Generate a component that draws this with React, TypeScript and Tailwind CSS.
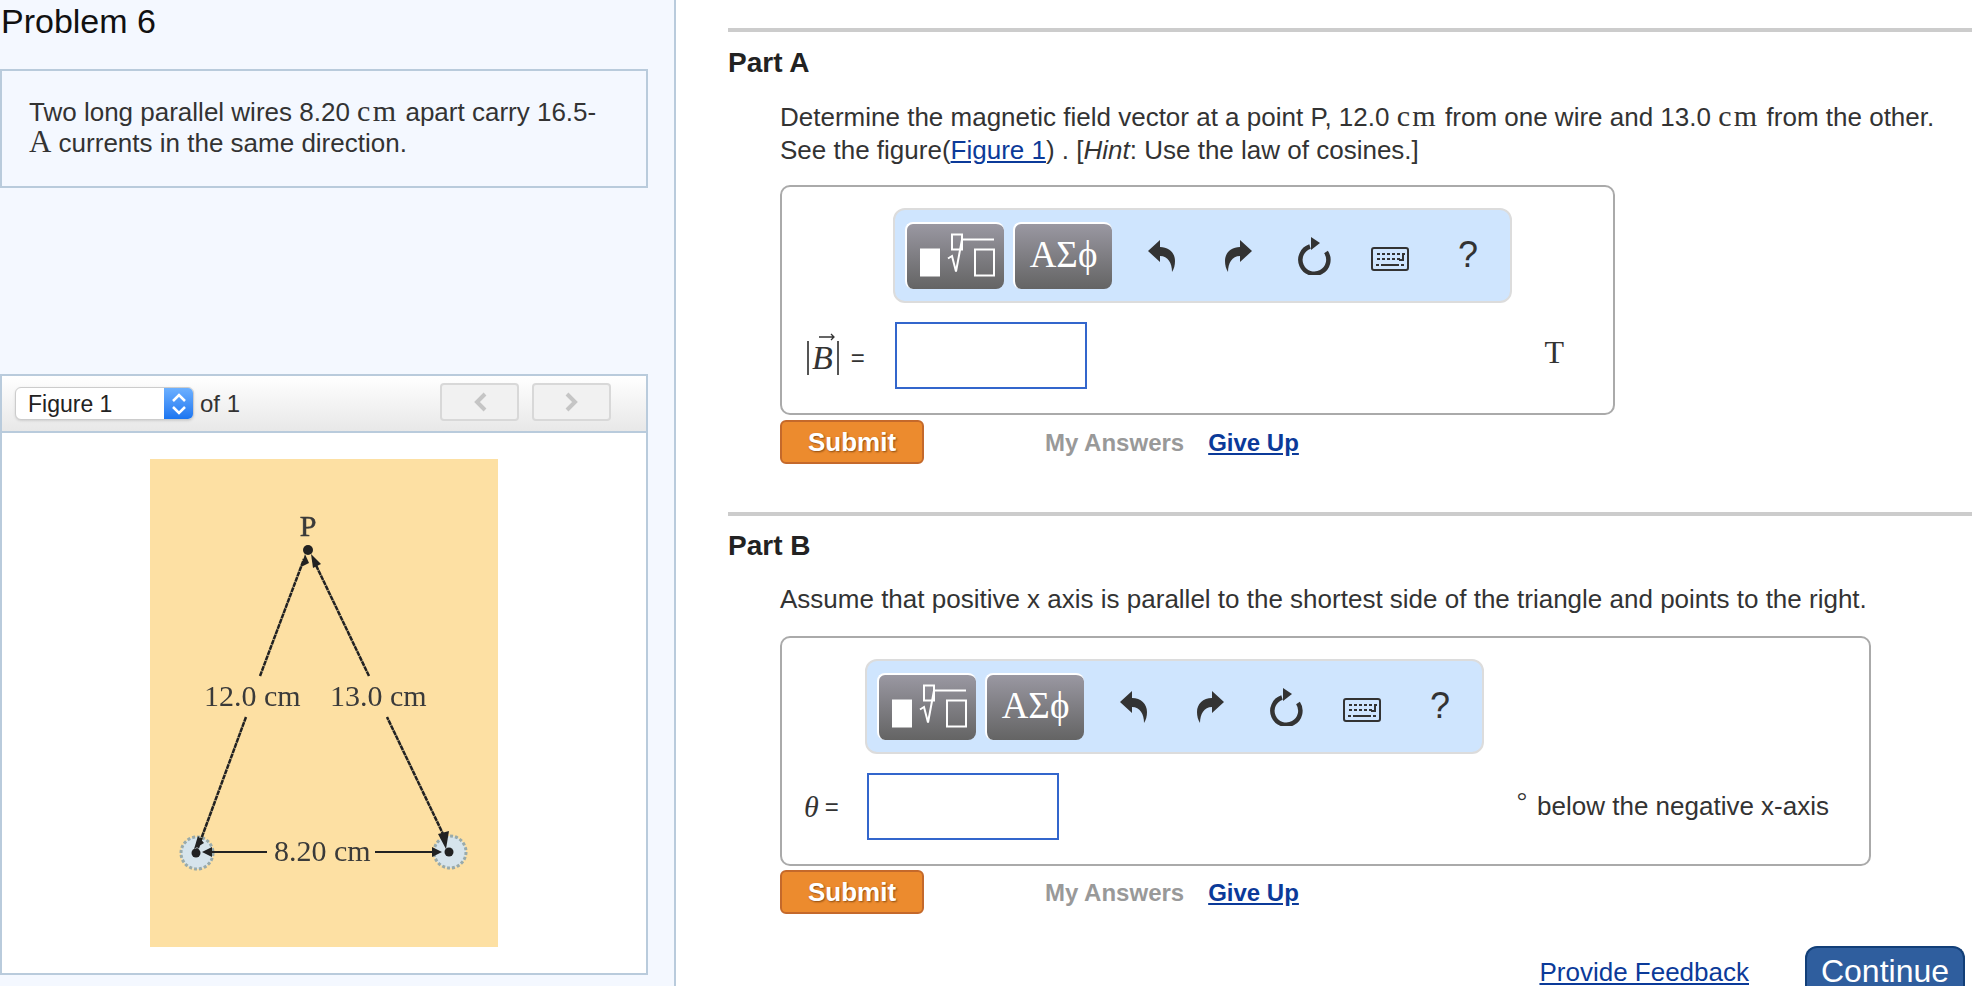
import React from 'react';

const sans = "font-['Liberation_Sans',Arial,sans-serif]";
const serif = "font-['Liberation_Serif',serif]";
const cm = `${serif} text-[30px] leading-[20px] tracking-[2.25px]`;

function UndoIcon({ flip }: { flip?: boolean }) {
  return (
    <svg width="30" height="34" viewBox="0 0 30 34" className={flip ? '-scale-x-100' : ''}>
      <path d="M1 12 L13 1 L13 8 C22 8 28 14 28 22 C28 26 27 30 25 33 C25 24 21 17 13 17 L13 23 Z" fill="#333" />
    </svg>
  );
}

function ResetIcon() {
  return (
    <svg width="36" height="38" viewBox="0 0 36 38" fill="none">
      <path d="M14 9.5 A14 14 0 1 0 30 15" stroke="#333" strokeWidth="4.5" />
      <path d="M15 0 L24 6 L15 13 Z" fill="#333" />
    </svg>
  );
}

function KeyboardIcon() {
  const top = [6, 11, 16, 21, 26, 31];
  const mid = [6, 11, 16, 21, 26];
  return (
    <svg width="38" height="24" viewBox="0 0 38 24">
      <rect x="1" y="1" width="36" height="22" rx="2" fill="none" stroke="#333" strokeWidth="2" />
      {top.map((x) => <rect key={x} x={x} y="6" width="3" height="2" fill="#333" />)}
      {mid.map((x) => <rect key={x} x={x} y="11" width="3" height="2" fill="#333" />)}
      <path d="M33 6 V14 H28 V12 H31 V6 Z" fill="#333" />
      <rect x="5" y="17" width="3" height="2" fill="#333" />
      <rect x="10" y="17" width="18" height="2" fill="#333" />
      <rect x="30" y="17" width="3" height="2" fill="#333" />
    </svg>
  );
}

function MathToolbar() {
  return (
    <div className="flex h-[95px] w-[619px] items-center rounded-xl border-2 border-[#dcdcdc] bg-[#cfe5fe] pl-[10px]">
      <div className="flex h-[67px] w-[99px] items-center rounded-lg border-t-2 border-l-2 border-white bg-gradient-to-b from-[#9a98a2] to-[#646464] pl-[12px]">
        <svg width="80" height="48" viewBox="0 0 80 48" fill="none">
          <rect x="1" y="15.5" width="20" height="28" fill="#fff" />
          <rect x="33" y="1.5" width="10" height="15" stroke="#fff" strokeWidth="2" />
          <path d="M29 25.5 L33 23 L37 38.5 L43 6.5 H75" stroke="#fff" strokeWidth="2" />
          <rect x="56" y="16.5" width="19" height="26" stroke="#fff" strokeWidth="2" />
        </svg>
      </div>
      <div className={`ml-[9px] flex h-[67px] w-[99px] items-center justify-center rounded-lg border-t-2 border-l-2 border-white bg-gradient-to-b from-[#9a98a2] to-[#646464] pb-[4px] text-[37px] leading-none text-white ${serif}`}>
        ΑΣϕ
      </div>
      <div className="ml-[35px] flex w-[340px] items-center text-[#333]">
        <div className="flex w-[30px] justify-center"><UndoIcon /></div>
        <div className="ml-[46px] flex w-[30px] justify-center"><UndoIcon flip /></div>
        <div className="ml-[43px] flex w-[36px] justify-center"><ResetIcon /></div>
        <div className="ml-[39px] mt-[7px] flex w-[38px] justify-center"><KeyboardIcon /></div>
        <div className={`ml-[49px] pb-[1px] text-[36px] leading-none ${sans}`}>?</div>
      </div>
    </div>
  );
}

function SubmitRow({ className }: { className: string }) {
  return (
    <div className={`flex items-center ${className}`}>
      <button className="h-[44px] w-[144px] rounded-md border-2 border-[#c4692b] bg-[#ec8b2e] text-[26px] font-bold text-white [text-shadow:1px_1px_2px_#8a4a10]">
        Submit
      </button>
      <span className="ml-[121px] pt-[1px] text-[24px] font-bold text-[#999]">My Answers</span>
      <a className="ml-[24px] pt-[1px] text-[24px] font-bold text-[#0b3a99] underline">Give Up</a>
    </div>
  );
}

function AnswerBox({ widthClass, toolbarClass, label, unit }: {
  widthClass: string;
  toolbarClass: string;
  label: React.ReactNode;
  unit: React.ReactNode;
}) {
  return (
    <div className={`h-[230px] rounded-[10px] border-2 border-[#aaa] pt-[21px] ${widthClass}`}>
      <div className={toolbarClass}><MathToolbar /></div>
      <div className="mt-[19px] flex items-center justify-between">
        <div className="flex items-center">
          {label}
          <div className="h-[67px] w-[192px] border-2 border-[#3366cc] bg-white" />
        </div>
        {unit}
      </div>
    </div>
  );
}

export default function App() {
  return (
    <div className={`flex h-[986px] w-[1972px] overflow-hidden bg-white text-[#333] ${sans}`}>
      <aside className="h-full w-[676px] shrink-0 border-r-2 border-[#b9cbdc] bg-[#f4f8ff]">
        <h1 className="h-[69px] pl-[1px] pt-[1px] text-[34px] leading-[40px] text-[#111]">Problem 6</h1>
        <div className="h-[119px] w-[648px] border-2 border-[#b9cbdc] pl-[27px] pt-[26px] text-[26px] leading-[31px]">
          Two long parallel wires 8.20 <span className={cm}>cm</span> apart carry 16.5-
          <br />
          <span className={`${serif} text-[31px] leading-[20px]`}>A</span> currents in the same direction.
        </div>
        <div className="mt-[186px] h-[601px] w-[648px] border-2 border-[#b9cbdc] bg-white">
          <div className="flex h-[57px] items-center border-b-2 border-[#b9cbdc] bg-gradient-to-b from-white to-[#e8e8e8] pl-[13px]">
            <div className="flex h-[33px] w-[179px] overflow-hidden rounded-md border border-[#ccc] bg-white shadow-sm">
              <span className="flex-1 pl-[12px] text-[23px] leading-[33px] text-[#222]">Figure 1</span>
              <span className="flex w-[29px] items-center justify-center bg-gradient-to-b from-[#6cb0ff] to-[#1a75f0]">
                <svg width="16" height="24" viewBox="0 0 16 24" fill="none" stroke="#fff" strokeWidth="2.5">
                  <path d="M2 9 L8 3 L14 9" />
                  <path d="M2 15 L8 21 L14 15" />
                </svg>
              </span>
            </div>
            <span className="ml-[6px] text-[24px]">of 1</span>
            <div className="ml-auto mr-[35px] flex gap-[13px] pb-[4px]">
              <div className="flex h-[38px] w-[79px] items-center justify-center rounded-sm border-2 border-[#d8d8d8] bg-[#f1f1f1]">
                <svg width="14" height="20" viewBox="0 0 14 20" fill="none" stroke="#c5c5c5" strokeWidth="4"><path d="M12 2 L4 10 L12 18" /></svg>
              </div>
              <div className="flex h-[38px] w-[79px] items-center justify-center rounded-sm border-2 border-[#d8d8d8] bg-[#f1f1f1]">
                <svg width="14" height="20" viewBox="0 0 14 20" fill="none" stroke="#c5c5c5" strokeWidth="4"><path d="M2 2 L10 10 L2 18" /></svg>
              </div>
            </div>
          </div>
          <div className="pl-[148px] pt-[26px]">
            <svg width="348" height="488" viewBox="0 0 348 488" className="block">
              <rect width="348" height="488" fill="#fde0a3" />
              <g className="blur-[0.4px]">
                <circle cx="47" cy="394" r="16" fill="#d6e4ec" stroke="#9aa" strokeWidth="3" strokeDasharray="3 2" />
                <circle cx="300" cy="393" r="16" fill="#d6e4ec" stroke="#9aa" strokeWidth="3" strokeDasharray="3 2" />
                <g stroke="#222" strokeWidth="2.5" fill="none" strokeDasharray="5 0.6">
                  <path d="M46 394 L96 258" />
                  <path d="M110 217 L154 100" />
                  <path d="M294 377 L237 258" />
                  <path d="M219 217 L163 100" />
                </g>
                <g stroke="#222" strokeWidth="2" fill="none">
                  <path d="M60 393 H117" />
                  <path d="M225 393 H285" />
                </g>
                <circle cx="46" cy="394" r="4.5" fill="#222" />
                <circle cx="299" cy="393" r="4.5" fill="#222" />
                <circle cx="158" cy="91" r="5" fill="#222" />
                <g fill="#222">
                  <path d="M155 95 L151 108 L159 104 Z" />
                  <path d="M161 95 L171 105 L163 109 Z" />
                  <path d="M48 377 L44 390 L54 384 Z" />
                  <path d="M296 390 L288 375 L299 372 Z" />
                  <path d="M52 393 L62 388 V398 Z" />
                  <path d="M292 393 L282 388 V398 Z" />
                </g>
                <g fontFamily="'Liberation Serif', serif" fill="#3a3a3a" fontSize="30">
                  <text x="158" y="77" textAnchor="middle" fontSize="30" stroke="#3a3a3a" strokeWidth="0.5">P</text>
                  <text x="54" y="247">12.0 cm</text>
                  <text x="180" y="247">13.0 cm</text>
                  <text x="124" y="402">8.20 cm</text>
                </g>
              </g>
            </svg>
          </div>
        </div>
      </aside>

      <main className="flex-1 pl-[52px] pt-[28px]">
        <div className="h-[4px] bg-[#ccc]" />
        <h2 className="mt-[15px] text-[28px] font-bold leading-[32px] text-[#222]">Part A</h2>
        <div className="ml-[52px]">
          <p className="mt-[22px] text-[26px] leading-[33px]">
            Determine the magnetic field vector at a point P, 12.0 <span className={cm}>cm</span> from one wire and 13.0 <span className={cm}>cm</span> from the other.
            <br />
            See the figure(<a className="text-[#0b3a99] underline">Figure 1</a>) . [<i>Hint</i>: Use the law of cosines.]
          </p>
          <AnswerBox
            widthClass="mt-[18px] w-[835px]"
            toolbarClass="ml-[111px]"
            label={
              <span className="ml-[25px] mt-[5px] flex w-[88px] items-center">
                <span className="h-[34px] w-[2px] bg-[#555]" />
                <span className={`relative ml-[3px] mr-[4px] text-[34px] italic leading-none ${serif}`}>
                  B
                  <svg width="16" height="8" viewBox="0 0 16 8" fill="none" stroke="#333" strokeWidth="1.3" className="absolute -top-[8px] left-[7px]">
                    <path d="M0 4 H15 M12 1 L15 4 L12 7" />
                  </svg>
                </span>
                <span className="h-[34px] w-[2px] bg-[#555]" />
                <span className="ml-[12px] text-[24px] leading-none">=</span>
              </span>
            }
            unit={<span className={`mb-[8px] mr-[49px] text-[32px] text-[#333] ${serif}`}>T</span>}
          />
          <SubmitRow className="mt-[5px]" />
        </div>

        <div className="mt-[48px] h-[4px] bg-[#ccc]" />
        <h2 className="mt-[14px] text-[28px] font-bold leading-[32px] text-[#222]">Part B</h2>
        <div className="ml-[52px]">
          <p className="mt-[21px] text-[26px] leading-[33px]">
            Assume that positive x axis is parallel to the shortest side of the triangle and points to the right.
          </p>
          <AnswerBox
            widthClass="mt-[20px] w-[1091px]"
            toolbarClass="ml-[83px]"
            label={
              <span className={`ml-[22px] flex w-[63px] items-center text-[30px] italic ${serif}`}>
                θ<span className={`ml-[6px] text-[24px] not-italic ${sans}`}>=</span>
              </span>
            }
            unit={
              <span className="mr-[40px] flex items-start text-[26px]">
                <span className={`mr-[10px] mt-[-6px] ${serif}`}>°</span>below the negative x-axis
              </span>
            }
          />
          <SubmitRow className="mt-[4px]" />
          <div className="mt-[32px] flex items-start justify-end pr-[7px]">
            <a className="mt-[12px] text-[26px] leading-[28px] text-[#0b3a99] underline">Provide Feedback</a>
            <button className="ml-[56px] h-[40px] w-[160px] rounded-t-xl border-2 border-b-0 border-[#123f78] bg-[#2f5e9e] pt-[8px] text-[32px] leading-[30px] text-white">
              Continue
            </button>
          </div>
        </div>
      </main>
    </div>
  );
}
